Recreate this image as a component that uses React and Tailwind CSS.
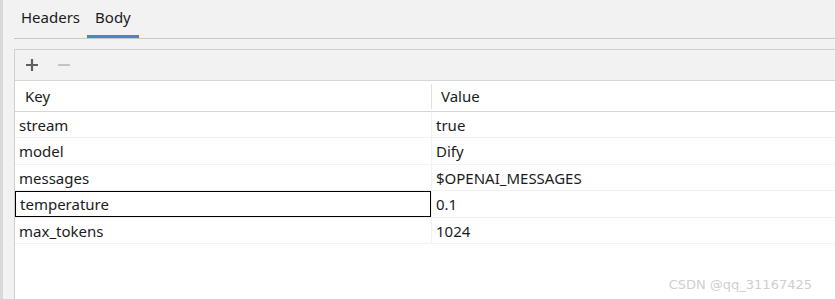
import React from 'react';

const rows = [
  { key: 'stream', value: 'true' },
  { key: 'model', value: 'Dify' },
  { key: 'messages', value: '$OPENAI_MESSAGES' },
  { key: 'temperature', value: '0.1', selected: true },
  { key: 'max_tokens', value: '1024' },
];

export default function App() {
  return (
    <div
      className="flex h-[299px] w-[835px] overflow-hidden bg-[#f2f2f2] text-[15px] text-[#1b1b1b]"
      style={{ fontFamily: '"Noto Sans", "Open Sans", sans-serif' }}
    >
      <div className="w-[3px] shrink-0 bg-[#d9d9d9]" />
      <div className="flex min-w-0 flex-1 flex-col pl-[11px]">
        {/* tabs */}
        <div className="flex h-[39px] shrink-0 items-end border-b border-[#c9c9c9] pl-[6px]">
          <div className="px-[1px] pb-[11px] leading-[20px]">Headers</div>
          <div className="ml-[6px] flex flex-col items-center">
            <div className="px-[8px] pb-[8px] leading-[20px]">Body</div>
            <div className="h-[3px] w-full bg-[#4a85c6]" />
          </div>
        </div>

        <div className="mt-[10px] flex flex-1 flex-col border-l border-t border-[#cfcfcf] bg-white">
          {/* toolbar */}
          <div className="flex h-[31px] shrink-0 items-center gap-[18px] border-b border-[#d6d6d6] bg-[#f2f2f2] pl-[10px]">
            <svg width="14" height="14" viewBox="0 0 14 14">
              <path d="M7 1v12M1 7h12" stroke="#5f5f5f" strokeWidth="2.2" />
            </svg>
            <svg width="14" height="14" viewBox="0 0 14 14">
              <path d="M1 7h12" stroke="#c4c4c4" strokeWidth="2" />
            </svg>
          </div>

          {/* header */}
          <div className="flex h-[31px] shrink-0 items-center border-b border-[#d6d6d6]">
            <div className="w-[416px] pl-[10px]">Key</div>
            <div className="h-[25px] w-px bg-[#e0e0e0]" />
            <div className="pl-[9px]">Value</div>
          </div>

          {/* rows */}
          {rows.map((r) => (
            <div key={r.key} className="flex h-[26.4px] shrink-0 border-b border-[#f2f2f2]">
              <div
                className={`flex w-[416px] items-center pl-[4px] pt-[1px] ${
                  r.selected ? 'border border-black pl-[3px]' : ''
                }`}
              >
                {r.key}
              </div>
              <div className="w-px bg-[#f2f2f2]" />
              <div className="flex items-center pl-[4px] pt-[1px]">{r.value}</div>
            </div>
          ))}

          <div className="relative flex-1">
            <span
              className="absolute right-[23px] bottom-[5px] text-[13px] text-[#cfcfcf]"
              style={{ fontFamily: '"DejaVu Sans", sans-serif' }}
            >
              CSDN @qq_31167425
            </span>
          </div>
        </div>
      </div>
    </div>
  );
}
